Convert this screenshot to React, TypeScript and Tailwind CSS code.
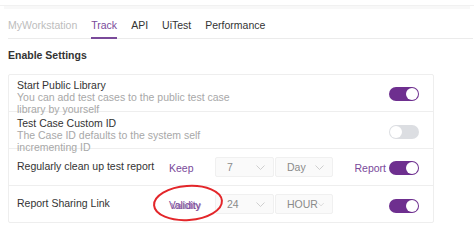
import React from "react";

function Toggle({ on }: { on: boolean }) {
  return on ? (
    <div className="relative h-[14px] w-[30px] rounded-full bg-[#6e2f8f]">
      <div className="absolute right-[1px] top-[1px] h-[12px] w-[12px] rounded-full bg-white" />
    </div>
  ) : (
    <div className="relative h-[14px] w-[30px] rounded-full bg-[#dcdee2]">
      <div className="absolute left-[1px] top-[1px] h-[12px] w-[12px] rounded-full bg-white" />
    </div>
  );
}

function Select({ value, w }: { value: string; w: string }) {
  return (
    <div
      className={`flex h-[20px] ${w} items-center justify-between rounded-[2px] border border-[#f0f0f0] bg-[#fafafa] pl-[11px] pr-[8px] text-[10.5px] text-[#8a8a8a]`}
    >
      <span>{value}</span>
      <svg width="9" height="5" viewBox="0 0 9 5" fill="none">
        <path d="M0.5 0.5 L4.5 4.5 L8.5 0.5" stroke="#c9c9c9" strokeWidth="0.9" />
      </svg>
    </div>
  );
}

export default function App() {
  return (
    <div
      className="relative h-[249px] w-[474px] overflow-hidden bg-white text-[#333]"
      style={{ fontFamily: '"Liberation Sans", Arial, sans-serif' }}
    >
      <div className="h-[6px] border-b border-[#f1f1f1]" />
      <div className="mx-[4px] h-[3px] bg-[#f8f8f8]" />

      {/* Tabs */}
      <div className="ml-[8px] mr-[1px] mt-[1px] flex gap-[14px] border-b border-[#ebebeb] text-[10.5px] leading-[12px]">
        <div className="h-[28px] pt-[9px] text-[#bdbdbd]">MyWorkstation</div>
        <div className="-mb-px h-[29px] border-b-2 border-[#7a4a9a] pt-[9px] text-[#7a4a9a]">Track</div>
        <div className="h-[28px] pt-[9px] text-[#333]">API</div>
        <div className="h-[28px] pt-[9px] text-[#333]">UiTest</div>
        <div className="h-[28px] pt-[9px] text-[#333]">Performance</div>
      </div>

      <div className="ml-[8px] mt-[10px] text-[10.5px] font-bold leading-[12px] text-[#333]">
        Enable Settings
      </div>

      {/* Card */}
      <div className="ml-[8px] mt-[13px] w-[426px] rounded-[2px] border border-[#eeeeee] text-[10.5px] leading-[12px]">
        <div className="flex h-[36px] items-start pl-[8px] pr-[14px]">
          <div className="pt-[4px]">
            <div className="text-[#333]">Start Public Library</div>
            <div className="text-[#a8a8a8]">You can add test cases to the public test case</div>
            <div className="text-[#a8a8a8]">library by yourself</div>
          </div>
          <div className="ml-auto mt-[12px]">
            <Toggle on />
          </div>
        </div>
        <div className="flex h-[37px] items-start border-t border-[#eeeeee] pl-[8px] pr-[14px]">
          <div className="pt-[5px]">
            <div className="text-[#333]">Test Case Custom ID</div>
            <div className="text-[#a8a8a8]">The Case ID defaults to the system self</div>
            <div className="text-[#a8a8a8]">incrementing ID</div>
          </div>
          <div className="ml-auto mt-[13px]">
            <Toggle on={false} />
          </div>
        </div>
        <div className="flex h-[37px] items-center border-t border-[#eeeeee] pl-[8px] pr-[14px]">
          <div className="w-[152px] pb-[3px] text-[#333]">Regularly clean up test report</div>
          <div className="w-[46px] pt-[1px] text-[#7a4a9a]">Keep</div>
          <Select value="7" w="w-[59px]" />
          <div className="ml-[1px]">
            <Select value="Day" w="w-[58px]" />
          </div>
          <div className="ml-auto flex items-center gap-[3px] pt-[2px]">
            <span className="text-[#7a4a9a]">Report</span>
            <Toggle on />
          </div>
        </div>
        <div className="flex h-[37px] items-center border-t border-[#eeeeee] pl-[8px] pr-[14px]">
          <div className="w-[152px] pb-[2px] text-[#333]">Report Sharing Link</div>
          <div className="relative w-[46px] pt-[3px] text-[10px] text-[#7a4a9a]">
            <span>Validity</span>
            <span className="absolute left-[2px] top-[3px] text-[9.5px] opacity-80">Validity</span>
          </div>
          <Select value="24" w="w-[59px]" />
          <div className="ml-[1px]">
            <Select value="HOUR" w="w-[58px]" />
          </div>
          <div className="ml-auto pt-[3px]">
            <Toggle on />
          </div>
        </div>
      </div>

      {/* red annotation ellipse */}
      <svg
        className="absolute left-[150px] top-[182px]"
        width="78"
        height="44"
        viewBox="0 0 78 44"
        fill="none"
      >
        <ellipse
          cx="38"
          cy="21"
          rx="34"
          ry="17"
          stroke="#e3262a"
          strokeWidth="2"
          transform="rotate(-4 38 21)"
        />
      </svg>
    </div>
  );
}
